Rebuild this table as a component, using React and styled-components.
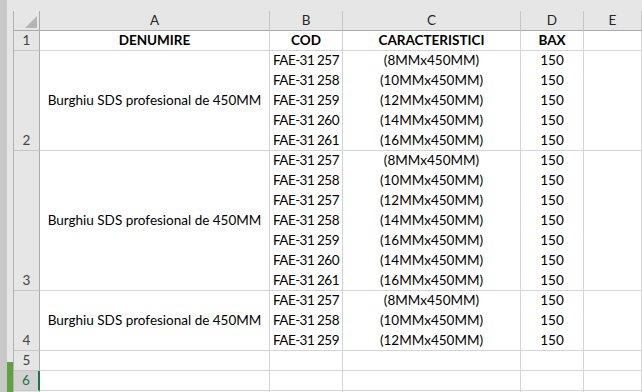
import React from "react";
import styled, { createGlobalStyle, css } from "styled-components";

const GlobalStyle = createGlobalStyle`
  html, body { margin: 0; padding: 0; background: #ffffff; }
  body {
    font-family: "Lato", "Liberation Sans", sans-serif;
    font-size: 13.5px;
    color: #000000;
    overflow: hidden;
  }
`;

const GRID = "#d4d4d4";
const HEAD_BG = "#e6e6e6";
const HEAD_EDGE = "#ababab";
const HEAD_SEP = "#c6c6c6";
const ACCENT = "#217346";

const Window = styled.div`
  display: flex;
  height: 100vh;
  overflow: hidden;
`;

const OuterStrip = styled.div`
  width: 7px;
  flex: none;
  background: #c8c8c8;
`;

const Frame = styled.div`
  flex: 1;
  display: flex;
  flex-direction: column;
  background: ${HEAD_BG};
  min-width: 0;
`;

const TopBand = styled.div`
  height: 11px;
  flex: none;
`;

const FrameBody = styled.div`
  flex: 1;
  display: flex;
  min-height: 0;
`;

const Gutter = styled.div`
  width: 6px;
  flex: none;
  display: flex;
  flex-direction: column;
`;

const OutlineBar = styled.div`
  margin-top: 351px;
  height: 40px;
  background: #62a13f;
`;

const Sheet = styled.div`
  flex: 1;
  display: grid;
  grid-template-columns: 26px 230px 73px 178px 63px 1fr;
  grid-auto-rows: min-content;
  align-content: start;
  border-left: 1px solid #b1b1b1;
  background: #ffffff;
`;

const cellBase = css`
  box-sizing: border-box;
  height: ${(p) => p.$lines * 20}px;
  border-right: 1px solid ${GRID};
  border-bottom: 1px solid ${GRID};
  overflow: hidden;
  white-space: nowrap;
  display: flex;
  flex-direction: column;
  gap: 1px;
`;

const Cell = styled.div`
  ${cellBase};
  padding: 0 3px;
  text-align: ${(p) => p.$align || "left"};
  justify-content: ${(p) => (p.$middle ? "center" : "flex-start")};
  font-weight: ${(p) => (p.$bold ? 700 : 400)};
  letter-spacing: ${(p) => (p.$tight ? "-0.55px" : "normal")};
`;

const Line = styled.div`
  height: 19px;
  line-height: 19px;
  flex: none;
`;

const ColHead = styled.div`
  box-sizing: border-box;
  height: 20px;
  line-height: 19px;
  background: ${HEAD_BG};
  border-right: 1px solid ${HEAD_SEP};
  border-bottom: 1px solid ${HEAD_EDGE};
  text-align: center;
  color: #262626;
`;

const Corner = styled.div`
  box-sizing: border-box;
  height: 20px;
  background: ${HEAD_BG};
  border-right: 1px solid ${HEAD_EDGE};
  border-bottom: 1px solid ${HEAD_EDGE};
  display: flex;
  justify-content: flex-end;
  align-items: flex-end;
  padding: 0 2px 2px 0;
`;

const CornerMark = styled.div`
  width: 12px;
  height: 12px;
  background: #b5b5b5;
  clip-path: polygon(100% 0, 100% 100%, 0 100%);
`;

const RowHead = styled.div`
  ${cellBase};
  background: ${(p) => (p.$active ? "#d2d2d2" : HEAD_BG)};
  color: ${(p) => (p.$active ? ACCENT : "#444444")};
  border-bottom-color: ${HEAD_SEP};
  border-right: ${(p) =>
    p.$active ? `2px solid ${ACCENT}` : `1px solid ${HEAD_EDGE}`};
  justify-content: flex-end;
  text-align: center;
`;

const columns = ["A", "B", "C", "D", "E"];

const groups = [
  {
    row: 2,
    items: [
      ["FAE-31 257", "8"],
      ["FAE-31 258", "10"],
      ["FAE-31 259", "12"],
      ["FAE-31 260", "14"],
      ["FAE-31 261", "16"],
    ],
  },
  {
    row: 3,
    items: [
      ["FAE-31 257", "8"],
      ["FAE-31 258", "10"],
      ["FAE-31 257", "12"],
      ["FAE-31 258", "14"],
      ["FAE-31 259", "16"],
      ["FAE-31 260", "14"],
      ["FAE-31 261", "16"],
    ],
  },
  {
    row: 4,
    items: [
      ["FAE-31 257", "8"],
      ["FAE-31 258", "10"],
      ["FAE-31 259", "12"],
    ],
  },
];

const PRODUCT = "Burghiu SDS profesional de 450MM";

function EmptyRow({ n, active }) {
  return (
    <>
      <RowHead $lines={1} $active={active}>
        {n && <Line>{n}</Line>}
      </RowHead>
      {columns.map((c) => (
        <Cell key={c} $lines={1} />
      ))}
    </>
  );
}

export default function App() {
  return (
    <>
      <GlobalStyle />
      <Window>
        <OuterStrip />
        <Frame>
          <TopBand />
          <FrameBody>
            <Gutter>
              <OutlineBar />
            </Gutter>
            <Sheet>
              <Corner>
                <CornerMark />
              </Corner>
              {columns.map((c) => (
                <ColHead key={c}>{c}</ColHead>
              ))}

              <RowHead $lines={1}>
                <Line>1</Line>
              </RowHead>
              <Cell $lines={1} $align="center" $bold>
                <Line>DENUMIRE</Line>
              </Cell>
              <Cell $lines={1} $align="center" $bold>
                <Line>COD</Line>
              </Cell>
              <Cell $lines={1} $align="center" $bold>
                <Line>CARACTERISTICI</Line>
              </Cell>
              <Cell $lines={1} $align="center" $bold>
                <Line>BAX</Line>
              </Cell>
              <Cell $lines={1} />

              {groups.map((g) => {
                const n = g.items.length;
                return (
                  <React.Fragment key={g.row}>
                    <RowHead $lines={n}>
                      <Line>{g.row}</Line>
                    </RowHead>
                    <Cell $lines={n} $align="center" $middle>
                      <Line>{PRODUCT}</Line>
                    </Cell>
                    <Cell $lines={n} $tight>
                      {g.items.map(([code], i) => (
                        <Line key={i}>{code}</Line>
                      ))}
                    </Cell>
                    <Cell $lines={n} $align="center">
                      {g.items.map(([, size], i) => (
                        <Line key={i}>({size}MMx450MM)</Line>
                      ))}
                    </Cell>
                    <Cell $lines={n} $align="center">
                      {g.items.map((_, i) => (
                        <Line key={i}>150</Line>
                      ))}
                    </Cell>
                    <Cell $lines={n} />
                  </React.Fragment>
                );
              })}

              <EmptyRow n={5} />
              <EmptyRow n={6} active />
              <EmptyRow />
            </Sheet>
          </FrameBody>
        </Frame>
      </Window>
    </>
  );
}
